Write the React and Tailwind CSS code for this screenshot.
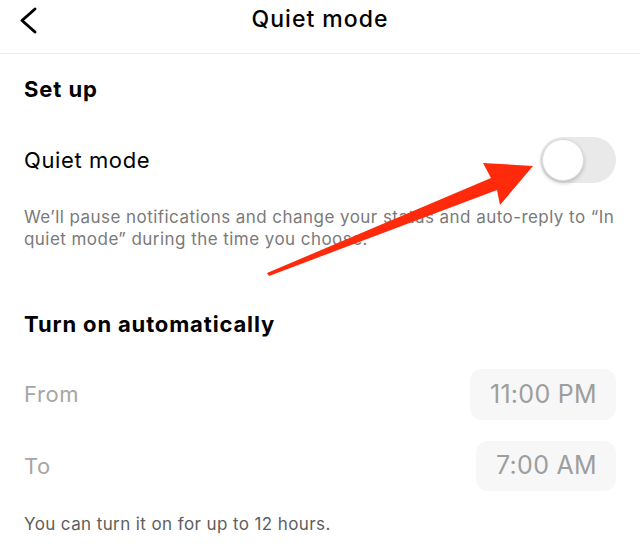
import React from "react";

const Toggle = () => (
  <div className="w-[76px] h-[46px] rounded-full bg-[#e9e9ea] p-[2px] flex items-center">
    <div className="w-[42px] h-[42px] rounded-full bg-white shadow-[0_2px_4px_rgba(0,0,0,0.2)] border border-[#dcdcdc]" />
  </div>
);

const TimeRow = ({ label, value, className }) => (
  <div className={`flex items-center justify-between ${className}`}>
    <span className="text-[22px] tracking-[0.6px] text-[#a6a6a6]">{label}</span>
    <div className="h-full flex items-center pl-5 pr-[19px] rounded-[12px] bg-[#f7f7f7] text-[25px] tracking-[0.3px] text-[#9e9e9e]">
      {value}
    </div>
  </div>
);

export default function App() {
  return (
    <div
      className="relative w-[640px] h-[544px] overflow-hidden bg-white text-black"
      style={{ fontFamily: "Inter, 'Noto Sans', sans-serif" }}
    >
      {/* Header */}
      <div className="h-[54px] border-b border-[#ececec] grid grid-cols-[1fr_auto_1fr] items-center">
        <div className="pl-[19px] pb-[12px]">
          <svg width="20" height="30" viewBox="0 0 20 30" fill="none">
            <path d="M16 3 L3 14.5 L16 26" stroke="#000" strokeWidth="3" strokeLinecap="round" strokeLinejoin="round" />
          </svg>
        </div>
        <div className="text-[23px] font-medium tracking-[1px] pb-[14px]">Quiet mode</div>
        <div />
      </div>

      <div className="px-6">
        <div className="pt-[22px] text-[22px] leading-[26px] font-bold tracking-[0.9px]">Set up</div>

        <div className="mt-[35px] h-[46px] flex items-center justify-between">
          <span className="text-[22px] tracking-[0.6px]">Quiet mode</span>
          <Toggle />
        </div>

        <p className="mt-[23px] text-[17px] leading-[22px] tracking-[0.45px] text-[#7a7a7a] whitespace-nowrap">
          We’ll pause notifications and change your status and auto-reply to “In
          <br />
          quiet mode” during the time you choose.
        </p>

        <div className="mt-[61px] text-[22px] leading-[26px] font-bold tracking-[0.85px]">Turn on automatically</div>

        <TimeRow label="From" value="11:00 PM" className="mt-[32px] h-[51px]" />
        <TimeRow label="To" value="7:00 AM" className="mt-[21px] h-[50px]" />

        <p className="mt-[22px] text-[17px] leading-[22px] tracking-[0.4px] text-[#5e5e5e]">
          You can turn it on for up to 12 hours.
        </p>
      </div>

      {/* annotation arrow */}
      <svg className="absolute inset-0 pointer-events-none" width="640" height="544" viewBox="0 0 640 544">
        <polygon
          points="533,166 483,163 491,178 267,273 269,276 497,190 500,205"
          fill="#ff2a0c"
        />
      </svg>
    </div>
  );
}
